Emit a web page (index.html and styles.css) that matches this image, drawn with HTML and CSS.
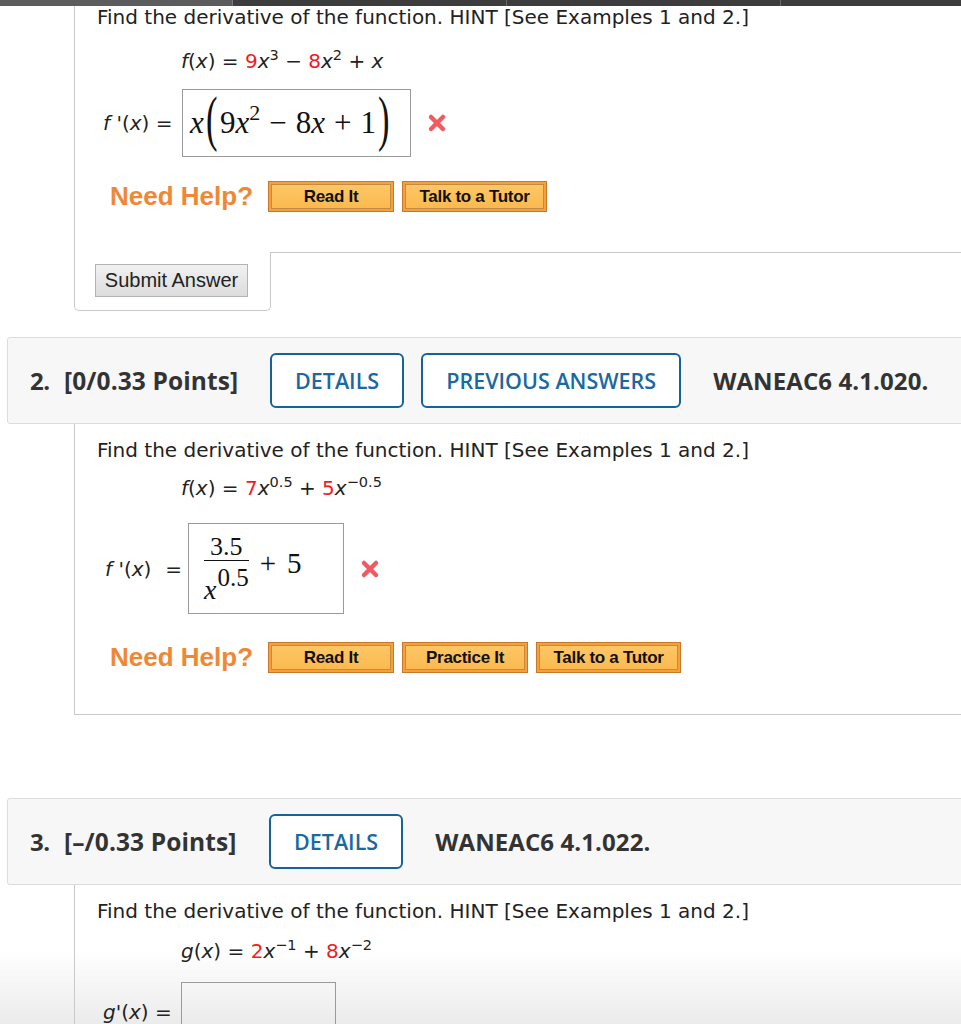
FILE: index.html
```html
<!DOCTYPE html>
<html>
<head>
<meta charset="utf-8">
<title>WebAssign</title>
<link rel="stylesheet" href="styles.css">
</head>
<body>
<div class="topbar"><div class="seg seg-light"></div><div class="seg seg-a"></div><div class="seg seg-b"></div><div class="seg seg-c"></div></div>

<section class="q q1">
  <div class="qbody qbody1">
    <p class="prompt">Find the derivative of the function. HINT [See Examples 1 and 2.]</p>
    <p class="formula f1"><i>f</i>(<i>x</i>) = <span class="red">9</span><i>x</i><sup>3</sup> − <span class="red">8</span><i>x</i><sup>2</sup> + <i>x</i></p>
    <div class="answer a1">
      <span class="label l1"><i>f</i> '(<i>x</i>) =</span>
      <div class="abox abox1"><span class="mj m1"><i>x</i><span class="bigp">(</span>9<i>x</i><sup class="msup">2</sup><span class="op">−</span>8<i>x</i><span class="op">+</span>1<span class="bigp">)</span></span></div>
      <svg class="wrong" width="20" height="20" viewBox="0 0 20 20"><path d="M4 4 L16 16 M16 4 L4 16" /></svg>
    </div>
    <div class="help h1">
      <span class="needhelp">Need Help?</span>
      <button class="obtn w125">Read It</button>
      <button class="obtn w145">Talk to a Tutor</button>
    </div>
  </div>
  <div class="qfoot">
    <div class="tab"><button class="submit">Submit Answer</button></div>
    <div class="filler"></div>
  </div>
</section>

<section class="q q2">
  <header class="qhead">
    <span class="qnum">2.</span><span class="qpts">[0/0.33 Points]</span>
    <button class="dbtn">DETAILS</button>
    <button class="dbtn">PREVIOUS ANSWERS</button>
    <span class="qcode">WANEAC6 4.1.020.</span>
  </header>
  <div class="qbody qbody2">
    <p class="prompt p2">Find the derivative of the function. HINT [See Examples 1 and 2.]</p>
    <p class="formula f2"><i>f</i>(<i>x</i>) = <span class="red">7</span><i>x</i><sup>0.5</sup> + <span class="red">5</span><i>x</i><sup>−0.5</sup></p>
    <div class="answer a2">
      <span class="label l2"><span><i>f</i> '(<i>x</i>)</span><span>=</span></span>
      <div class="abox abox2"><span class="mj frac"><span class="num">3.5</span><span class="den"><i>x</i><span class="dsup">0.5</span></span></span><span class="mj plus5"><span class="op">+</span>5</span></div>
      <svg class="wrong" width="20" height="20" viewBox="0 0 20 20"><path d="M4 4 L16 16 M16 4 L4 16" /></svg>
    </div>
    <div class="help h2">
      <span class="needhelp">Need Help?</span>
      <button class="obtn w125">Read It</button>
      <button class="obtn w125">Practice It</button>
      <button class="obtn w145">Talk to a Tutor</button>
    </div>
  </div>
</section>

<section class="q q3">
  <header class="qhead">
    <span class="qnum">3.</span><span class="qpts">[–/0.33 Points]</span>
    <button class="dbtn">DETAILS</button>
    <span class="qcode">WANEAC6 4.1.022.</span>
  </header>
  <div class="qbody qbody3">
    <p class="prompt p3">Find the derivative of the function. HINT [See Examples 1 and 2.]</p>
    <p class="formula f3"><i>g</i>(<i>x</i>) = <span class="red">2</span><i>x</i><sup>−1</sup> + <span class="red">8</span><i>x</i><sup>−2</sup></p>
    <div class="answer a3">
      <span class="label l3"><i>g</i>'(<i>x</i>) =</span>
      <div class="abox abox3"></div>
    </div>
  </div>
</section>
</body>
</html>
```

FILE: styles.css
```css
* { box-sizing: border-box; }
html { margin: 0; padding: 0; background: #fff; }
body {
  margin: 0;
  padding: 0;
  width: 961px;
  height: 1024px;
  overflow: hidden;
  font-family: "DejaVu Sans", Verdana, sans-serif;
  color: #222;
  background: linear-gradient(to bottom, #ffffff 0, #ffffff 950px, #ebebeb 1024px);
}

/* top bar */
.topbar { display: flex; height: 6px; background: #3d3d3d; }
.seg { height: 100%; }
.seg-light { width: 233px; background: #5c5c5c; border-right: 1px solid #7a7a7a; }
.seg-a, .seg-b { width: 274px; border-right: 1px solid #6a6a6a; }
.seg-c { flex: 1; }

/* question body */
.qbody { margin-left: 74px; border-left: 1px solid #c9c9c9; padding-left: 22px; }
.qbody1 { padding-bottom: 40px; background: #fff; }
.qbody2 { border-bottom: 1px solid #c9c9c9; padding-top: 15px; padding-bottom: 41px; background: #fff; }
.qbody3 { padding-top: 15px; padding-bottom: 20px; }

.prompt { margin: 0; font-size: 20px; line-height: 22px; color: #222; }
.formula { margin: 0 0 0 84px; font-size: 20px; line-height: 22px; color: #222; white-space: nowrap; }
.f1 { margin-top: 22px; }
.f2 { margin-top: 16px; }
.f3 { margin-top: 18px; }
.formula i, .label i { font-style: italic; }
.formula sup {
  font-size: 14.5px;
  line-height: 0;
  vertical-align: 8px;
}
.red { color: #ee1d23; }

.answer { display: flex; align-items: center; }
.a1 { margin-top: 17px; }
.a2 { margin-top: 24px; }
.a3 { margin-top: 20px; }
.label { font-size: 20px; padding-left: 6px; white-space: nowrap; }
.l1 { width: 85px; }
.l2 { width: 91px; padding-left: 8px; padding-right: 6px; display: flex; justify-content: space-between; }
.l3 { width: 84px; }

.abox { border: 1px solid #9a9a9a; display: flex; align-items: flex-start; }
.abox1 { width: 229px; height: 68px; padding-left: 7px; align-items: center; background: #fff; }
.abox2 { width: 156px; height: 91px; padding-left: 15px; background: #fff; }
.abox3 { width: 155px; height: 60px; align-self: flex-start; background: transparent; }

.mj { font-family: "Liberation Serif", "Times New Roman", serif; color: #111; white-space: nowrap; }
.mj i { font-style: italic; }
.m1 { font-size: 31px; }
.m1 .op { margin: 0 9px; }
.msup { font-size: 22px; line-height: 0; vertical-align: 13px; }
.bigp {
  display: inline-block;
  font-size: 46px;
  line-height: 0;
  transform: scale(0.75, 1.35);
  vertical-align: -1px;
  margin: 0 1px 0 0;
}

.frac { display: flex; flex-direction: column; align-items: center; margin-top: 10px; }
.num { display: block; width: 100%; text-align: center; border-bottom: 1px solid #111; font-size: 26px; line-height: 26px; padding: 0 3px; }
.den { display: flex; align-items: flex-start; line-height: 1; }
.den i { font-size: 28px; margin-top: 15px; margin-right: 1px; }
.dsup { font-size: 25px; margin-top: 4px; }
.plus5 { font-size: 29px; line-height: 32px; margin-top: 23px; margin-left: 11px; }
.plus5 .op { margin-right: 11px; }

.wrong { margin-left: 16px; }
.wrong path { stroke: #f25a62; stroke-width: 4.5; stroke-linecap: round; fill: none; }

/* help row */
.help { display: flex; align-items: center; padding-left: 13px; }
.h1 { margin-top: 24px; }
.h2 { margin-top: 28px; }
.needhelp {
  font-family: "Liberation Sans", Arial, sans-serif;
  font-weight: bold;
  font-size: 26px;
  color: #ef8834;
  margin-right: 15px;
  white-space: nowrap;
}
.obtn {
  height: 31px;
  margin-right: 8px;
  padding: 0;
  border: 1px solid #c9772a;
  background: linear-gradient(#fdc868, #fbb84c);
  box-shadow: inset 0 0 0 2px #f6a03c, inset 0 0 0 3px #c58a42;
  font-family: "Liberation Sans", Arial, sans-serif;
  font-weight: bold;
  font-size: 17px;
  color: #111;
  letter-spacing: -0.3px;
}
.w125 { width: 126px; }
.w145 { width: 145px; }

/* footer with submit tab */
.qfoot { display: flex; margin-left: 74px; }
.tab {
  width: 197px;
  background: #fff;
  border-left: 1px solid #c9c9c9;
  border-right: 1px solid #c9c9c9;
  border-bottom: 1px solid #c9c9c9;
  border-radius: 0 0 5px 5px;
  padding: 12px 0 13px 20px;
}
.filler { flex: 1; border-top: 1px solid #c9c9c9; }
.submit {
  width: 153px;
  height: 33px;
  border: 1px solid #b3b3b3;
  background: linear-gradient(#f1f1f1, #dcdcdc);
  font-family: "Liberation Sans", Arial, sans-serif;
  font-size: 20px;
  color: #222;
  padding: 0;
}

/* question header */
.qhead {
  margin-left: 7px;
  margin-right: -12px;
  background: #f7f7f7;
  border: 1px solid #dcdcdc;
  border-radius: 3px;
  padding: 15px 0 15px 22px;
  display: flex;
  align-items: center;
  font-family: "Open Sans", sans-serif;
  color: #333;
}
.q2 { margin-top: 26px; }
.q3 { margin-top: 83px; }
.qnum { font-weight: 700; font-size: 24px; width: 34px; white-space: nowrap; letter-spacing: -0.5px; }
.qpts { font-weight: 700; font-size: 24.5px; width: 206px; white-space: nowrap; letter-spacing: 0.1px; }
.q3 .qpts { width: 205px; }
.dbtn {
  height: 55px;
  padding: 0 23px;
  margin-right: 17px;
  border: 2px solid #14639a;
  border-radius: 6px;
  background: #fff;
  color: #1a69a1;
  font-family: "Open Sans", sans-serif;
  font-weight: 600;
  font-size: 21.5px;
  white-space: nowrap;
}
.qhead .dbtn:last-of-type { margin-right: 32px; }
.qcode { font-weight: 700; font-size: 24px; color: #333; white-space: nowrap; letter-spacing: 0.1px; }
```
